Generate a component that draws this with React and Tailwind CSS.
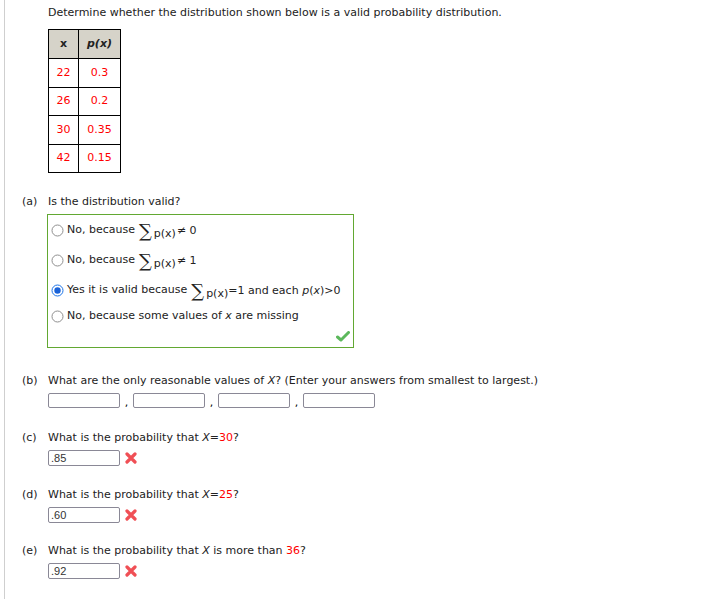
import React from "react";

const F = { fontFamily: '"DejaVu Sans", Verdana, sans-serif' };

function Radio({ checked }) {
  return (
    <svg width="13" height="13" viewBox="0 0 13 13" className="shrink-0">
      <circle cx="6.5" cy="6.5" r="5.5" fill="#fff" stroke={checked ? "#1a73e8" : "#8f8f8f"} strokeWidth="1" />
      {checked && <circle cx="6.5" cy="6.5" r="3.2" fill="#1a62d8" />}
    </svg>
  );
}

function Sum() {
  return (
    <span className="inline-flex items-end ml-[4px]">
      <span className="text-[18px] leading-[14px]" style={{ fontFamily: '"DejaVu Serif", serif' }}>∑</span>
      <span className="relative top-[4px] ml-[2px]">p(x)</span>
    </span>
  );
}

function XMark() {
  return (
    <svg width="12" height="12" viewBox="0 0 12 12" className="ml-[5px]">
      <path d="M2 2 L10 10 M10 2 L2 10" stroke="#f04f55" strokeWidth="3.2" strokeLinecap="round" />
    </svg>
  );
}

function Input({ value, h = "h-[16px]" }) {
  return (
    <div
      className={`w-[72px] ${h} border border-[#8a8896] rounded-[2px] bg-white flex items-center px-[2px] text-[11px] text-[#333]`}
      style={{ fontFamily: '"Liberation Sans", Arial, sans-serif' }}
    >
      {value}
    </div>
  );
}

function Q({ label, children }) {
  return (
    <div className="flex text-[11px] leading-[13px] text-[#222]">
      <span className="w-[26px] shrink-0">{label}</span>
      <span>{children}</span>
    </div>
  );
}

export default function App() {
  const rows = [
    ["22", "0.3"],
    ["26", "0.2"],
    ["30", "0.35"],
    ["42", "0.15"],
  ];
  return (
    <div className="w-[701px] h-[599px] bg-white overflow-hidden" style={F}>
      <div className="ml-[4px] h-full border-l border-[#cfcfcf] pl-[17px]">
        <div className="pl-[26px] pt-[6px] text-[11px] leading-[13px] text-[#222]">
          Determine whether the distribution shown below is a valid probability distribution.
        </div>
        <div className="pl-[26px] mt-[10px]">
          <table className="border-collapse text-[11px]">
            <thead>
              <tr className="bg-[#d6d3c9] h-[29px]">
                <th className="border border-black w-[30px] font-bold text-[#222]">x</th>
                <th className="border border-black w-[42px] font-bold italic text-[#222]">p(x)</th>
              </tr>
            </thead>
            <tbody>
              {rows.map(([a, b], i) => (
                <tr key={i} className={i % 2 === 0 ? "h-[29px]" : "h-[28px]"}>
                  <td className="border border-black text-center text-[#f00]">{a}</td>
                  <td className="border border-black text-center text-[#f00]">{b}</td>
                </tr>
              ))}
            </tbody>
          </table>
        </div>

        <div className="mt-[22px]">
          <Q label="(a)">Is the distribution valid?</Q>
        </div>
        <div className="ml-[25px] mt-[6px] w-[307px] h-[134px] border border-[#62a832] flex flex-col text-[11px] text-[#222] relative">
          <div className="flex items-center h-[14px] mt-[8px] pl-[3px]">
            <Radio />
            <span className="ml-[3px]">No, because</span>
            <Sum />
            <span className="relative top-[1px] ml-[1px]">≠ 0</span>
          </div>
          <div className="flex items-center h-[14px] mt-[16px] pl-[3px]">
            <Radio />
            <span className="ml-[3px]">No, because</span>
            <Sum />
            <span className="relative top-[1px] ml-[1px]">≠ 1</span>
          </div>
          <div className="flex items-center h-[14px] mt-[16px] pl-[3px]">
            <Radio checked />
            <span className="ml-[3px]">Yes it is valid because</span>
            <Sum />
            <span className="relative top-[1px]">=1 and each <i>p</i>(<i>x</i>)&gt;0</span>
          </div>
          <div className="flex items-center h-[14px] mt-[12px] pl-[3px]">
            <Radio />
            <span className="ml-[3px]">No, because some values of <i>x</i> are missing</span>
          </div>
          <svg width="14" height="11" viewBox="0 0 14 11" className="absolute right-[3px] bottom-[5px]">
            <path d="M1.5 6 L5 9 L12.5 1.5" fill="none" stroke="#5cb85c" strokeWidth="3" strokeLinecap="round" strokeLinejoin="round" />
          </svg>
        </div>

        <div className="mt-[26px]">
          <Q label="(b)">
            What are the only reasonable values of <i>X</i>? (Enter your answers from smallest to largest.)
          </Q>
        </div>
        <div className="ml-[26px] mt-[6px] flex items-end text-[11px]">
          <Input h="h-[15px]" />
          <span className="w-[13px] text-center leading-[10px]">,</span>
          <Input h="h-[15px]" />
          <span className="w-[13px] text-center leading-[10px]">,</span>
          <Input h="h-[15px]" />
          <span className="w-[13px] text-center leading-[10px]">,</span>
          <Input h="h-[15px]" />
        </div>

        <div className="mt-[23px]">
          <Q label="(c)">
            What is the probability that <i>X</i>=<span className="text-[#f00]">30</span>?
          </Q>
        </div>
        <div className="ml-[26px] mt-[6px] flex items-center">
          <Input value=".85" />
          <XMark />
        </div>

        <div className="mt-[22px]">
          <Q label="(d)">
            What is the probability that <i>X</i>=<span className="text-[#f00]">25</span>?
          </Q>
        </div>
        <div className="ml-[26px] mt-[6px] flex items-center">
          <Input value=".60" />
          <XMark />
        </div>

        <div className="mt-[21px]">
          <Q label="(e)">
            What is the probability that <i>X</i> is more than <span className="text-[#f00]">36</span>?
          </Q>
        </div>
        <div className="ml-[26px] mt-[6px] flex items-center">
          <Input value=".92" />
          <XMark />
        </div>
      </div>
    </div>
  );
}
